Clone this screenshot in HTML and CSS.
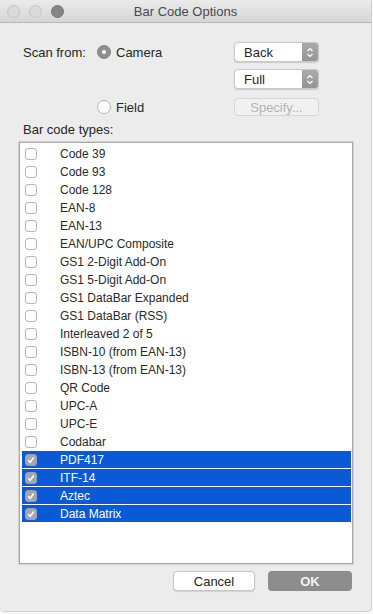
FILE: index.html
```html
<!DOCTYPE html>
<html>
<head>
    <title>Bar Code Options</title>
    <link rel="stylesheet" href="styles.css">
</head>
<body>
    <div class="window">
        <div class="titlebar">
            <div class="lights">
                <span class="light"></span>
                <span class="light"></span>
                <span class="light dark"></span>
            </div>
            <div class="title">Bar Code Options</div>
        </div>

        <div class="content">
            <!-- Scan source -->
            <div class="options">
                <div class="label">Scan from:</div>
                <div class="radio-row">
                    <span class="radio on"></span>
                    <span>Camera</span>
                </div>
                <div class="popup">
                    <span class="popup-text">Back</span>
                    <span class="stepper">
                        <svg width="8" height="11" viewBox="0 0 8 11"><path d="M1.5 4 L4 1.5 L6.5 4 M1.5 7 L4 9.5 L6.5 7" fill="none" stroke="#fff" stroke-width="1.2"/></svg>
                    </span>
                </div>

                <div></div>
                <div></div>
                <div class="popup">
                    <span class="popup-text">Full</span>
                    <span class="stepper">
                        <svg width="8" height="11" viewBox="0 0 8 11"><path d="M1.5 4 L4 1.5 L6.5 4 M1.5 7 L4 9.5 L6.5 7" fill="none" stroke="#fff" stroke-width="1.2"/></svg>
                    </span>
                </div>

                <div></div>
                <div class="radio-row">
                    <span class="radio"></span>
                    <span>Field</span>
                </div>
                <div class="button disabled">Specify...</div>
            </div>

            <div class="label types-label">Bar code types:</div>

            <div class="list" id="typeList"></div>

            <div class="footer">
                <div class="button cancel">Cancel</div>
                <div class="button ok">OK</div>
            </div>
        </div>
    </div>

    <script>
        const types = [
            'Code 39', 'Code 93', 'Code 128', 'EAN-8', 'EAN-13', 'EAN/UPC Composite',
            'GS1 2-Digit Add-On', 'GS1 5-Digit Add-On', 'GS1 DataBar Expanded', 'GS1 DataBar (RSS)',
            'Interleaved 2 of 5', 'ISBN-10 (from EAN-13)', 'ISBN-13 (from EAN-13)', 'QR Code',
            'UPC-A', 'UPC-E', 'Codabar', 'PDF417', 'ITF-14', 'Aztec', 'Data Matrix'
        ];
        const checked = ['PDF417', 'ITF-14', 'Aztec', 'Data Matrix'];
        const list = document.getElementById('typeList');

        types.forEach(name => {
            const row = document.createElement('div');
            const on = checked.includes(name);
            row.className = on ? 'row selected' : 'row';
            row.innerHTML = '<span class="check">' +
                (on ? '<svg width="8" height="8" viewBox="0 0 8 8"><path d="M1.2 4.3 L3.2 6.3 L6.8 1.5" fill="none" stroke="#fff" stroke-width="1.5"/></svg>' : '') +
                '</span><span class="name"></span>';
            row.querySelector('.name').textContent = name;
            list.appendChild(row);
        });
    </script>
</body>
</html>
```

FILE: styles.css
```css
body {
    margin: 0;
    background: #f7f7f7;
    font-family: "Liberation Sans", Arial, sans-serif;
    color: #262626;
}

.window {
    width: 371px;
    height: 611px;
    background: #ececec;
    border-right: 1px solid #cfcfcf;
    border-bottom: 1px solid #cfcfcf;
    border-radius: 0 0 5px 5px;
    overflow: hidden;
}

.titlebar {
    height: 22px;
    display: flex;
    align-items: center;
    background: linear-gradient(#ebebeb, #d5d5d5);
    border-bottom: 1px solid #b7b7b7;
    position: relative;
}

.lights { display: flex; gap: 9px; padding-left: 7px; }
.light { width: 11px; height: 11px; border-radius: 50%; background: #dadada; border: 0.5px solid #c4c4c4; }
.light.dark { background: #858585; border-color: #777; }

.title {
    position: absolute;
    left: 0;
    right: 0;
    text-align: center;
    font-size: 13px;
    color: #4a4a4a;
    pointer-events: none;
}

.content { padding: 19px 0 0 19px; }

.options {
    display: grid;
    grid-template-columns: 73px 138px 85px;
    grid-template-rows: 20px 20px 20px;
    row-gap: 7px;
    margin-left: 4px;
    font-size: 13px;
}
.options > :nth-child(n+7) { margin-top: 2px; }

.label { font-size: 13px; display: flex; align-items: center; }

.radio-row { display: flex; align-items: center; gap: 5px; margin-left: 1px; }
.radio {
    width: 14px;
    height: 14px;
    border-radius: 50%;
    background: #fff;
    border: 1px solid #b8b8b8;
    box-sizing: border-box;
    position: relative;
}
.radio.on { background: #8e8e8e; border-color: #858585; }
.radio.on::after {
    content: "";
    position: absolute;
    left: 4px;
    top: 4px;
    width: 4px;
    height: 4px;
    border-radius: 50%;
    background: #fff;
}

.popup {
    display: flex;
    background: #fff;
    border: 1px solid #c9c9c9;
    border-radius: 4px;
    box-shadow: 0 0.5px 1px rgba(0, 0, 0, 0.15);
    overflow: hidden;
    box-sizing: border-box;
}
.popup-text { flex: 1; padding-left: 9px; display: flex; align-items: center; }
.stepper {
    width: 16px;
    background: linear-gradient(#aaaaaa, #959595);
    display: flex;
    align-items: center;
    justify-content: center;
}

.button {
    display: flex;
    align-items: center;
    justify-content: center;
    border-radius: 4px;
    box-sizing: border-box;
    font-size: 13px;
}
.button.disabled { border: 1px solid #d6d6d6; background: #f1f1f1; color: #b3b3b3; }

.types-label { margin: 6px 0 0 4px; height: 15px; }

.list {
    width: 334px;
    height: 422px;
    margin-top: 5px;
    box-sizing: border-box;
    background: #fff;
    border: 1px solid #a9a9a9;
    box-shadow: 0 0 0 1px #d2d2d2;
    padding: 2px 1px 0 2px;
}

.row {
    display: grid;
    grid-template-columns: 38px 1fr;
    align-items: center;
    height: 17px;
    margin-bottom: 1px;
    font-size: 12px;
    color: #2a2a2a;
}
.row.selected { background: #0a5ad8; color: #fff; }

.check {
    width: 12px;
    height: 12px;
    margin-left: 3px;
    border: 1px solid #b6b6b6;
    border-radius: 3px;
    box-sizing: border-box;
    background: #fff;
    display: flex;
    align-items: center;
    justify-content: center;
}
.row.selected .check { background: #a4a6b4; border-color: #9d9faf; }

.footer {
    display: flex;
    justify-content: flex-end;
    gap: 13px;
    width: 333px;
    margin-top: 7px;
}
.cancel { width: 82px; height: 20px; background: #fff; border: 1px solid #c8c8c8; box-shadow: 0 0.5px 1px rgba(0, 0, 0, 0.12); }
.ok { width: 84px; height: 20px; background: #8d8d8d; color: #f4f4f4; font-weight: bold; }
```
